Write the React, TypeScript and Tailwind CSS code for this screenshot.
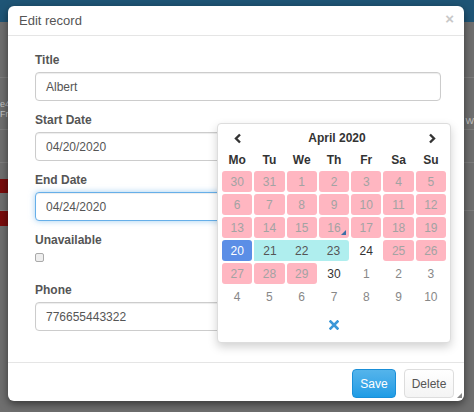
import React from "react";

type Cell = { d: number; kind: "pink" | "start" | "range" | "rangeEnd" | "cur" | "other" | "range21" ; today?: boolean };

const rows: Cell[][] = [
  [30, 31, 1, 2, 3, 4, 5].map((d) => ({ d, kind: "pink" as const })),
  [6, 7, 8, 9, 10, 11, 12].map((d) => ({ d, kind: "pink" as const })),
  [13, 14, 15, 16, 17, 18, 19].map((d) => ({ d, kind: "pink" as const, today: d === 16 })),
  [
    { d: 20, kind: "start" },
    { d: 21, kind: "range21" },
    { d: 22, kind: "range" },
    { d: 23, kind: "rangeEnd" },
    { d: 24, kind: "cur" },
    { d: 25, kind: "pink" },
    { d: 26, kind: "pink" },
  ],
  [
    { d: 27, kind: "pink" },
    { d: 28, kind: "pink" },
    { d: 29, kind: "pink" },
    { d: 30, kind: "cur" },
    { d: 1, kind: "other" },
    { d: 2, kind: "other" },
    { d: 3, kind: "other" },
  ],
  [4, 5, 6, 7, 8, 9, 10].map((d) => ({ d, kind: "other" as const })),
];

function DayCell({ c }: { c: Cell }) {
  let inner = "";
  switch (c.kind) {
    case "pink":
      inner = "bg-[#ffb6c1] text-[#a3a3a3] rounded-[3px]";
      break;
    case "start":
      inner = "bg-[#5b8ee6] text-white rounded-[3px]";
      break;
    case "range21":
      inner = "bg-[#afeeee] text-[#555] -mr-[1px]";
      break;
    case "range":
      inner = "bg-[#afeeee] text-[#555] -mx-[1px]";
      break;
    case "rangeEnd":
      inner = "bg-[#afeeee] text-[#555] -ml-[1px] rounded-r-[3px]";
      break;
    case "cur":
      inner = "text-[#333]";
      break;
    case "other":
      inner = "text-[#888]";
      break;
  }
  return (
    <div className="px-[1px]">
      <div className={`relative h-[21px] flex items-center justify-center text-[12px] ${inner}`}>
        {c.d}
        {c.today && (
          <span className="absolute right-[3px] bottom-[3px] w-0 h-0 border-l-[5px] border-l-transparent border-b-[5px] border-b-[#3b6fa6]" />
        )}
      </div>
    </div>
  );
}

function Field({ label, value, focused }: { label: string; value: string; focused?: boolean }) {
  return (
    <div className="mb-[11px]">
      <div className="h-[17px] leading-[17px] text-[12px] font-bold text-[#555] mb-[3px]">{label}</div>
      <div
        className={`h-[29px] rounded-[4px] border bg-white flex items-center pl-[10px] text-[12px] text-[#555] ${
          focused
            ? "border-[#66afe9] shadow-[inset_0_1px_1px_rgba(0,0,0,0.075),0_0_6px_rgba(102,175,233,0.6)]"
            : "border-[#ccc] shadow-[inset_0_1px_1px_rgba(0,0,0,0.075)]"
        }`}
      >
        {value}
      </div>
    </div>
  );
}

export default function App() {
  return (
    <div className="relative w-[474px] h-[412px] overflow-hidden bg-[#6f6f6f] font-['Liberation_Sans',Arial,sans-serif]">
      {/* background page (dimmed) */}
      <div className="flex flex-col">
        <div className="h-[22px] bg-[#1f5576]" />
        <div className="h-[56px] border-b border-[#7e7e7e]" />
        <div className="h-[52px] border-b border-[#7e7e7e] flex justify-between pt-[21px]">
          <div className="text-[9px] leading-[10px] text-[#c4c4c4]">
            <div>e4</div>
            <div>Fr</div>
          </div>
          <div className="text-[9px] leading-[10px] text-[#c4c4c4] pt-[17px]">W</div>
        </div>
        <div className="h-[33px] border-b border-[#7e7e7e]" />
        <div className="h-[16px]" />
        <div className="h-[14px] w-[30px] bg-[#7a0c0c]" />
        <div className="h-[18px] border-b border-[#7e7e7e]" />
        <div className="h-[15px] w-[30px] bg-[#7a0c0c]" />
      </div>

      {/* modal */}
      <div className="absolute left-[8px] top-[6px] w-[456px] h-[395px] bg-white rounded-[6px] shadow-[0_3px_9px_rgba(0,0,0,0.5)] flex flex-col">
        <div className="h-[30px] border-b border-[#e5e5e5] flex items-center justify-between pl-[11px] pr-[10px]">
          <span className="text-[13px] text-[#555]">Edit record</span>
          <span className="text-[15px] font-bold text-[#c8c8c8] leading-none -mt-[4px]">×</span>
        </div>
        <div className="flex-1 pl-[27px] pr-[23px] pt-[16px]">
          <Field label="Title" value="Albert" />
          <Field label="Start Date" value="04/20/2020" />
          <Field label="End Date" value="04/24/2020" focused />
          <div className="h-[17px] leading-[17px] text-[12px] font-bold text-[#555] mb-[4px]">Unavailable</div>
          <div className="w-[9px] h-[9px] border border-[#aaa] rounded-[2px] bg-[#eee] mb-[20px]" />
          <Field label="Phone" value="776655443322" />
        </div>
        <div className="h-[39px] border-t border-[#e5e5e5] flex justify-end items-start pt-[6px] pr-[10px] gap-[8px]">
          <button className="h-[29px] w-[44px] rounded-[4px] border border-[#1a8fd8] bg-linear-to-b from-[#54b4eb] to-[#1d9ce5] text-white text-[12px]">
            Save
          </button>
          <button className="h-[29px] w-[50px] rounded-[4px] border border-[#ddd] bg-linear-to-b from-white to-[#f4f4f4] text-[#555] text-[12px]">
            Delete
          </button>
        </div>
        <span className="absolute right-[2px] bottom-[3px] w-0 h-0 border-l-[5px] border-l-transparent border-b-[5px] border-b-[#888]" />
      </div>

      {/* datepicker popup */}
      <div className="absolute left-[217px] top-[123px] w-[234px] h-[220px] bg-white border border-[#ddd] rounded-[4px] shadow-[0_4px_10px_rgba(0,0,0,0.18)] p-[3px] flex flex-col">
        <div className="h-[22px] flex items-center justify-between pl-[13px] pr-[11px] text-[#333]">
          <svg width="8" height="11" viewBox="0 0 8 11">
            <path d="M6 1.5 L2 5.5 L6 9.5" fill="none" stroke="#333" strokeWidth="2.4" />
          </svg>
          <span className="text-[12px] font-bold text-[#333] ml-[4px]">April 2020</span>
          <svg width="8" height="11" viewBox="0 0 8 11">
            <path d="M2 1.5 L6 5.5 L2 9.5" fill="none" stroke="#333" strokeWidth="2.4" />
          </svg>
        </div>
        <div className="grid grid-cols-7 h-[22px] items-center">
          {["Mo", "Tu", "We", "Th", "Fr", "Sa", "Su"].map((n) => (
            <div key={n} className="text-center text-[12px] font-bold text-[#333]">
              {n}
            </div>
          ))}
        </div>
        <div className="flex flex-col gap-[2px]">
          {rows.map((r, i) => (
            <div key={i} className="grid grid-cols-7">
              {r.map((c, j) => (
                <DayCell key={j} c={c} />
              ))}
            </div>
          ))}
        </div>
        <div className="flex-1 flex items-center justify-center pt-[4px]">
          <svg width="10" height="10" viewBox="0 0 10 10">
            <path d="M1.5 1.5 L8.5 8.5 M8.5 1.5 L1.5 8.5" stroke="#3a97d8" strokeWidth="2.6" strokeLinecap="square" />
          </svg>
        </div>
      </div>
    </div>
  );
}
